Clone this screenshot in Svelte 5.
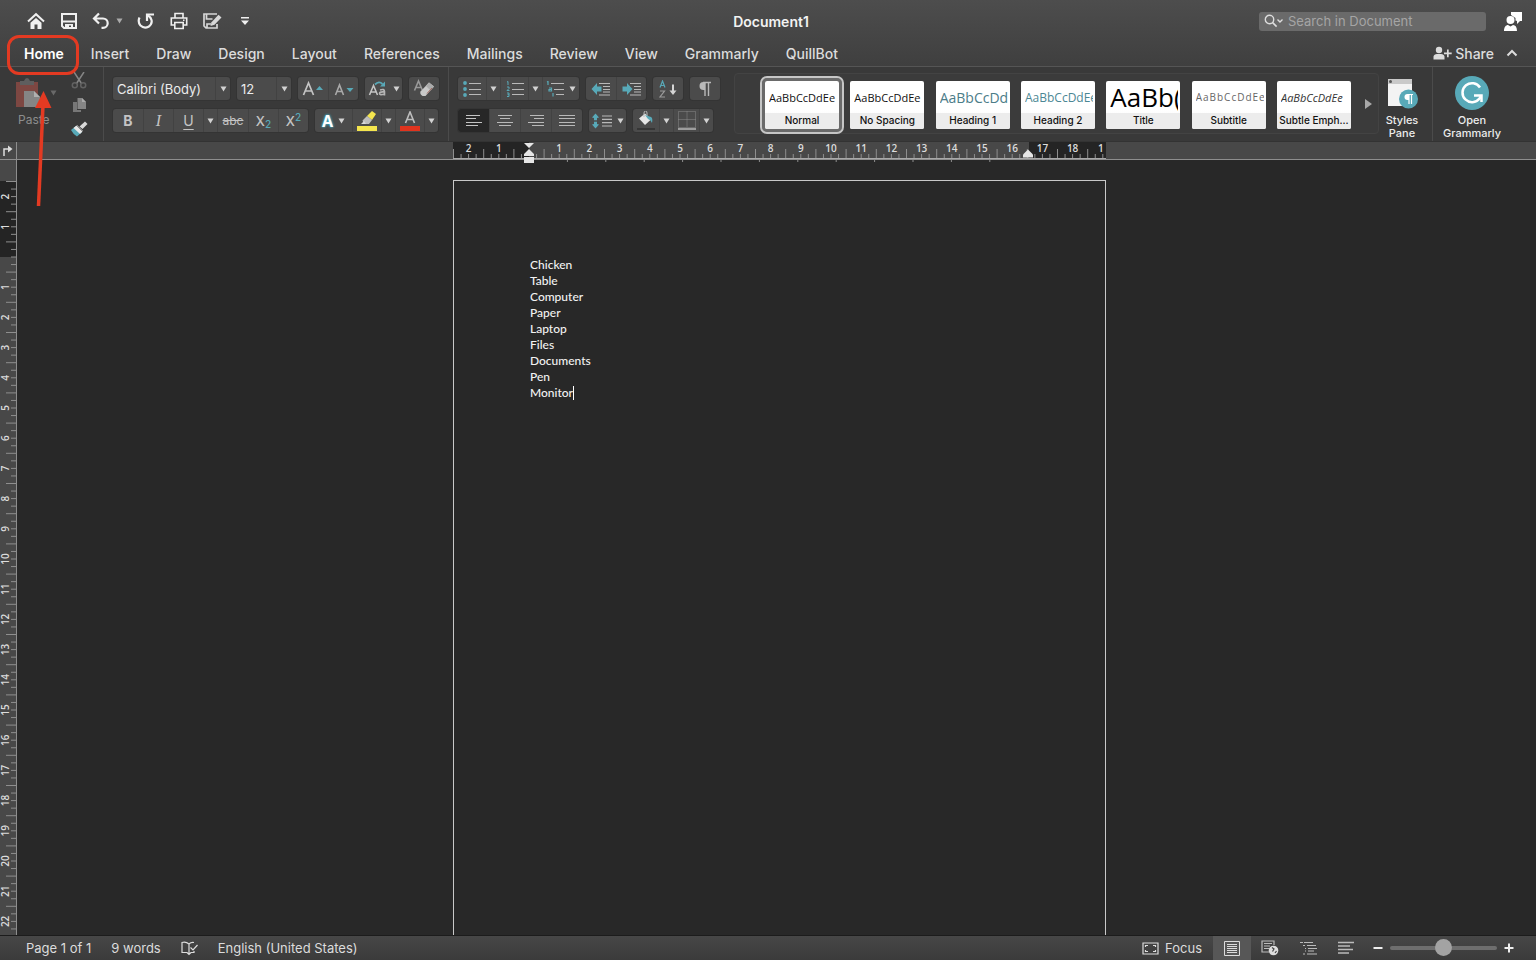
<script>
    const tabs = ["Home", "Insert", "Draw", "Design", "Layout", "References", "Mailings", "Review", "View", "Grammarly", "QuillBot"]
    const styles = [
        { name: "Normal", look: "body" },
        { name: "No Spacing", look: "body" },
        { name: "Heading 1", look: "h1" },
        { name: "Heading 2", look: "h2" },
        { name: "Title", look: "title" },
        { name: "Subtitle", look: "subtitle" },
        { name: "Subtle Emph...", look: "emph" }
    ]
    const lines = ["Chicken", "Table", "Computer", "Paper", "Laptop", "Files", "Documents", "Pen", "Monitor"]

    let activeTab = $state("Home")
    let activeStyle = $state("Normal")
    let zoom = $state(50)

    // one centimetre on screen, and the width of the page margin
    const cm = 30.2
    const margin = 76

    function makeTicks(from, to) {
        const out = []
        for (let q = from; q <= to; q++) {
            out.push({ at: margin + (q * cm) / 4, tall: Math.abs(q % 4) === 2 })
        }
        return out
    }

    function makeNumbers(from, to) {
        const out = []
        for (let n = from; n <= to; n++) {
            if (n !== 0) out.push({ at: margin + n * cm, label: Math.abs(n) })
        }
        return out
    }

    const hTicks = makeTicks(-10, 76).filter(t => t.at !== margin)
    const hNumbers = makeNumbers(-2, 18)
    const tabStops = Array.from({ length: 12 }, (_, i) => margin + (i + 1) * 38.4)
    const vTicks = makeTicks(-10, 160)
    const vNumbers = makeNumbers(-2, 22)
</script>

{#snippet caret()}
    <svg class="caret" width="7" height="6" viewBox="0 0 7 6"><path d="M0.5 0.5h6L3.5 5.5z" fill="currentColor" /></svg>
{/snippet}

{#snippet drop(label)}
    <button class="drop" aria-label={label}>{@render caret()}</button>
{/snippet}

<div class="app">
    <header>
        <div class="titlebar">
            <div class="quick">
                <button aria-label="Home">
                    <svg width="18" height="18" viewBox="0 0 18 18"><path d="M1 9.5L9 2.2l8 7.3" fill="none" stroke="currentColor" stroke-width="2" /><path d="M3.500 10.800L9 6l5.500 4.800V17h-4v-4.500h-3V17h-4z" fill="currentColor" /></svg>
                </button>
                <button aria-label="Save">
                    <svg width="18" height="18" viewBox="0 0 18 18"><path d="M2 2h14v14H4l-2-2z" fill="none" stroke="currentColor" stroke-width="2" /><path d="M2 9.500h14" stroke="currentColor" stroke-width="2" /><path d="M5 12h8v4h-2v-2.500H9V16H5z" fill="currentColor" /></svg>
                </button>
                <button class="undo" aria-label="Undo">
                    <svg width="18" height="18" viewBox="0 0 18 18"><path d="M7 1.500L2 6.500l5 5M2.500 6.500h8.500a4.700 4.700 0 0 1 0 9.400H9.500" fill="none" stroke="currentColor" stroke-width="2.200" /></svg>
                    {@render caret()}
                </button>
                <button aria-label="Redo">
                    <svg width="18" height="18" viewBox="0 0 18 18"><path d="M2.500 5.500Q0.500 10 3.500 13.500 7 17 11.500 14.800 15.500 12 14.500 8 13.500 5 11 3.500" fill="none" stroke="currentColor" stroke-width="2.200" /><path d="M10 9V2.500H17" fill="none" stroke="currentColor" stroke-width="2.200" /></svg>
                </button>
                <button aria-label="Print">
                    <svg width="18" height="18" viewBox="0 0 18 18" fill="none" stroke="currentColor" stroke-width="1.600"><path d="M5 6V1.500h8V6M4.500 13H1.300V6h15.400v7h-3.200" /><path d="M4.800 10.500h8.400v6H4.800zM13 8.300h1.500" /></svg>
                </button>
                <button aria-label="Edit and save">
                    <svg width="20" height="18" viewBox="0 0 20 18" opacity="0.850"><path d="M15 2H2v12l2 2h11v-4M4.500 2v5h6M5 16v-4h4" fill="none" stroke="currentColor" stroke-width="1.700" /><path d="M8.500 14l1-3.800 7-7.400 3 2.800-7 7.200z" fill="currentColor" /></svg>
                </button>
                <button aria-label="Customize toolbar">
                    <svg width="10" height="10" viewBox="0 0 10 10"><path d="M1 1h8v1.500H1zM1 4.500h8L5 9z" fill="currentColor" /></svg>
                </button>
            </div>
            <h1>Document1</h1>
            <div class="tools">
                <label class="search">
                    <svg width="20" height="14" viewBox="0 0 20 14" fill="none" stroke="currentColor"><circle cx="5.500" cy="5.500" r="4.200" stroke-width="1.400" /><path d="M8.600 8.600l4 4" stroke-width="1.600" /><path d="M13.500 5.500L16 8l2.500-2.500" stroke-width="1.400" /></svg>
                    <input type="text" placeholder="Search in Document" aria-label="Search in Document" />
                </label>
                <button aria-label="Feedback">
                    <svg width="20" height="20" viewBox="0 0 20 20" fill="currentColor"><path d="M8 1h11v9h-2l-3 3v-3l-1.500-.500V7L8 4z" /><circle cx="7.500" cy="9" r="4" /><path d="M1 20c0-4 2-6 4-6l2.500 1.500L10 14c2.500 0 4 2 4 6z" /></svg>
                </button>
            </div>
        </div>
        <div class="tabrow">
            <nav>
                {#each tabs as tab}
                    <button class:active={tab === activeTab} onclick={() => (activeTab = tab)}>{tab}</button>
                {/each}
                <span class="ring"></span>
            </nav>
            <div class="share">
                <button>
                    <svg width="19" height="14" viewBox="0 0 19 14" fill="currentColor"><circle cx="6" cy="4" r="3.200" /><path d="M0.500 13.500V10.500Q1 8 4 8h4q3 0 3.500 2.500v3zM14 3.500h1.700v3h3v1.700h-3v3H14v-3h-3V6.500h3z" /></svg>
                    Share
                </button>
                <button aria-label="Collapse ribbon">
                    <svg width="12" height="8" viewBox="0 0 12 8"><path d="M1.500 6.500L6 2l4.500 4.500" fill="none" stroke="currentColor" stroke-width="2" /></svg>
                </button>
            </div>
        </div>
    </header>

    <section class="ribbon">
        <div class="clipboard">
            <button class="paste" disabled>
                <span class="pasteicon">
                    <svg width="26" height="30" viewBox="0 0 26 30"><path d="M1 4h22v25H1z" fill="#7d4742" /><path d="M5 7V3h4q1-3 3-3t3 3h4v4z" fill="#5e5e5e" /><path d="M9 13h10l6 6v10H9z" fill="#858585" /><path d="M19 13v6h6z" fill="#b0b0b0" /></svg>
                    {@render caret()}
                </span>
                <span class="pastename">Paste</span>
            </button>
            <div class="clipside">
                <button aria-label="Cut" disabled>
                    <svg width="16" height="17" viewBox="0 0 16 17" fill="none" stroke="#858585" stroke-width="1.500"><path d="M3 0l7.500 11.500M13 0L5.500 11.500" /><circle cx="3.800" cy="13.300" r="2.500" stroke="#626262" /><circle cx="12.200" cy="13.300" r="2.500" stroke="#626262" /></svg>
                </button>
                <button aria-label="Copy" disabled>
                    <svg width="14" height="16" viewBox="0 0 14 16"><path d="M1 5h4v8h4v2H1z" fill="#777" /><path d="M5.500 1H10l4 4v7H5.500z" fill="#858585" /><path d="M10 1v4h4" fill="#aaa" /></svg>
                </button>
                <button aria-label="Format painter">
                    <svg width="18" height="16" viewBox="0 0 18 16"><path d="M1 9l5-4 6 6-5 4.500Q3 13 1 9z" fill="#58a9b8" /><path d="M3.500 7l3-2.500 6 6-2.500 2.500z" fill="#e8e8e8" /><path d="M9.500 5.500L15 0.500l2.500 2.500-5 5z" fill="#d9d9d9" /><path d="M7 4l6 6" stroke="#888" /></svg>
                </button>
            </div>
        </div>

        <div class="block font">
            <div class="row">
                <label class="combo family">
                    <select aria-label="Font"><option>Calibri (Body)</option></select>
                    <span class="arrow">{@render caret()}</span>
                </label>
                <label class="combo size">
                    <select aria-label="Font size"><option>12</option></select>
                    <span class="arrow">{@render caret()}</span>
                </label>
                <div class="group">
                    <button aria-label="Grow font"><svg width="22" height="16" viewBox="0 0 22 16"><path d="M1.500 14L6.500 2l5 12M3.500 10h6" fill="none" stroke="#c4c4c4" stroke-width="1.700" /><path d="M14 9l3.500-4L21 9z" fill="#58a9b8" /></svg></button>
                    <button aria-label="Shrink font"><svg width="22" height="16" viewBox="0 0 22 16"><path d="M2.500 14L6.500 4l4 10M4 10.500h5" fill="none" stroke="#a9a9a9" stroke-width="1.600" /><path d="M13.500 7h7L17 11z" fill="#58a9b8" /></svg></button>
                </div>
                <div class="group">
                    <button class="split" aria-label="Change case">
                        <svg width="20" height="18" viewBox="0 0 20 18" fill="none"><path d="M1.500 15L5.500 5.500l4 9.500M3 12h5" stroke="#c4c4c4" stroke-width="1.600" /><path d="M12 10q4.500-1.500 4.500 1.500v4M16.500 12q-5-.500-5 1.500t5 .500" stroke="#b5b5b5" stroke-width="1.600" /><path d="M7 4.500q4-4 7.500-.500" stroke="#58a9b8" stroke-width="1.800" /><path d="M12 6.500h5v-5z" fill="#58a9b8" /></svg>
                        {@render caret()}
                    </button>
                </div>
                <div class="group">
                    <button aria-label="Clear formatting"><svg width="22" height="20" viewBox="0 0 22 20"><path d="M1.500 11.500L5.500 2l4 9.500M3 8.500h5" fill="none" stroke="#999" stroke-width="1.600" /><path d="M7.500 12.500l8.500-9 5 4-8.500 9.500H9.500q-3-2-2-4.500z" fill="#c9c9c9" /><path d="M16 3.500l5 4-3.500 4-4.500-4.500z" fill="#ababab" /><path d="M14 14.500l5-5.500" stroke="#a2685d" /></svg></button>
                </div>
            </div>
            <div class="row">
                <div class="group">
                    <button class="bold">B</button>
                    <button class="italic">I</button>
                    <button class="under">U</button>
                    {@render drop("Underline style")}
                    <button class="strike">abc</button>
                    <button class="script">X<sub>2</sub></button>
                    <button class="script">X<sup>2</sup></button>
                </div>
                <div class="group colors">
                    <button class="split glow"><b>A</b>{@render caret()}</button>
                    <button aria-label="Highlight"><svg width="20" height="20" viewBox="0 0 20 20"><path d="M10 5l5-5 4 3-4 6z" fill="#f4e54e" /><path d="M5.500 9.500L10 5l5 4-3 4H7z" fill="#bdbdbd" /><path d="M4 13l3-3 2 3z" fill="#d8d8d8" /><path d="M0 15h20v5H0z" fill="#f4e54e" /></svg></button>
                    {@render drop("Highlight color")}
                    <button aria-label="Font color"><svg width="20" height="20" viewBox="0 0 20 20"><path d="M5.500 12L10 1l4.500 11M7 8.500h6" fill="none" stroke="#bdbdbd" stroke-width="1.600" /><path d="M0 15h20v5H0z" fill="#e0341e" /></svg></button>
                    {@render drop("Pick font color")}
                </div>
            </div>
        </div>

        <div class="block para">
            <div class="row">
                <div class="group">
                    <button aria-label="Bullets"><svg width="18" height="16" viewBox="0 0 18 16"><g fill="#58a9b8"><circle cx="2" cy="2" r="1.900" /><circle cx="2" cy="8" r="1.900" /><circle cx="2" cy="14" r="1.900" /></g><path d="M6 2.500h12M6 8.500h12M6 13.500h12" stroke="#b9b9b9" /></svg></button>
                    {@render drop("Bullet style")}
                    <button aria-label="Numbering"><svg width="18" height="16" viewBox="0 0 18 16" fill="none"><path d="M1 1l1-.500V4M1 6h2v1.500L1 9.500h2.500M1 12h2v3.500H1M1.500 13.700H3" stroke="#58a9b8" /><path d="M6 2.500h12M6 8.500h12M6 13.500h12" stroke="#b9b9b9" /></svg></button>
                    {@render drop("Number style")}
                    <button class="split" aria-label="Multilevel list">
                        <svg width="18" height="16" viewBox="0 0 18 16" fill="none"><path d="M1 1l1-.500V4M3 7h2.500v3H3V8.500h2M7 12v3.500" stroke="#58a9b8" stroke-width="1.200" /><path d="M5 2.500h13M8 8.500h10M10 13.500h8" stroke="#b9b9b9" /></svg>
                        {@render caret()}
                    </button>
                </div>
                <div class="group">
                    <button aria-label="Decrease indent"><svg width="20" height="14" viewBox="0 0 20 14"><path d="M8 1.500h11M12 4.500h7M12 7.500h7M12 10h7M8 13h11" stroke="#b9b9b9" stroke-width="1.200" /><path d="M0.500 7L6 1v3.500h4.500v5H6V13z" fill="#58a9b8" /></svg></button>
                    <button aria-label="Increase indent"><svg width="20" height="14" viewBox="0 0 20 14"><path d="M8 1.500h11M12 4.500h7M12 7.500h7M12 10h7M8 13h11" stroke="#b9b9b9" stroke-width="1.200" /><path d="M10.500 7L5 1v3.500H0.500v5H5V13z" fill="#58a9b8" /></svg></button>
                </div>
                <div class="group">
                    <button aria-label="Sort"><svg width="18" height="18" viewBox="0 0 18 18" fill="none"><path d="M1 7.500L3.500 1 6 7.500M2 5.500h3" stroke="#58a9b8" stroke-width="1.200" /><path d="M1 11h4.500L1 17h5" stroke="#9b9b9b" stroke-width="1.200" /><path d="M14 4.500V13" stroke="#d5d5d5" stroke-width="2" /><path d="M10.500 10.500h7L14 15z" fill="#d5d5d5" /></svg></button>
                </div>
                <div class="group">
                    <button aria-label="Show paragraph marks"><svg width="14" height="16" viewBox="0 0 14 16"><path d="M7 1H5.500a4 4 0 0 0 0 8H7z" fill="#b9b9b9" /><path d="M7 1v14M10.500 1v14M5 1.500h8" fill="none" stroke="#b9b9b9" stroke-width="1.400" /></svg></button>
                </div>
            </div>
            <div class="row">
                <div class="group aligns">
                    <button class="pressed" aria-label="Align left"><svg width="16" height="13" viewBox="0 0 16 13"><path d="M0 1.500h14M0 4.500h10M0 8.500h16M0 11.500h12" stroke="#c4c4c4" /></svg></button>
                    <button aria-label="Center"><svg width="16" height="13" viewBox="0 0 16 13"><path d="M1 1.500h14M3 4.500h10M0 8.500h16M2 11.500h12" stroke="#b9b9b9" /></svg></button>
                    <button aria-label="Align right"><svg width="16" height="13" viewBox="0 0 16 13"><path d="M2 1.500h14M6 4.500h10M0 8.500h16M4 11.500h12" stroke="#b9b9b9" /></svg></button>
                    <button aria-label="Justify"><svg width="16" height="13" viewBox="0 0 16 13"><path d="M0 1.500h16M0 4.500h16M0 8.500h16M0 11.500h16" stroke="#b9b9b9" /></svg></button>
                </div>
                <div class="group">
                    <button class="split" aria-label="Line spacing">
                        <svg width="20" height="16" viewBox="0 0 20 16"><path d="M0 4.500L3.500 0.500 7 4.500 5 5v2.300H2V5zM0 11.500l2-.500V8.700h3V11l2 .500-3.500 4z" fill="#58a9b8" /><path d="M10 3h10M10 6.300h10M10 9.700h10M10 13h10" stroke="#b9b9b9" stroke-width="1.200" /></svg>
                        {@render caret()}
                    </button>
                </div>
                <div class="group fills">
                    <button aria-label="Shading"><svg width="18" height="20" viewBox="0 0 18 20"><path d="M2 7.500L8 2.500l6 6-6 5.500z" fill="#e6e6e6" /><path d="M7 6V2q0-2 1.500-2T10 2v3" fill="none" stroke="#b9b9b9" /><path d="M8 4l6 2q2 1 1 6-1-3-4-4z" fill="#58a9b8" /><path d="M0 17h18v2H0z" fill="#363636" /></svg></button>
                    {@render drop("Shading color")}
                    <button aria-label="Borders"><svg width="18" height="19" viewBox="0 0 18 19" fill="none"><path d="M0.500 0.500h17v16H0.500zM9 0.500v16M0.500 8.500h17" stroke="#8a8a8a" stroke-dasharray="1 1" /><path d="M0 18h18" stroke="#b9b9b9" stroke-width="1.500" /></svg></button>
                    {@render drop("Border style")}
                </div>
            </div>
        </div>

        <div class="gallery">
            <div class="cards">
                {#each styles as s}
                    <button class="card" class:selected={s.name === activeStyle} onclick={() => (activeStyle = s.name)}>
                        <span class="sample {s.look}">{s.look === "title" ? "AaBb(" : "AaBbCcDdEe"}</span>
                        <span class="name">{s.name}</span>
                    </button>
                {/each}
            </div>
            <button class="more" aria-label="More styles"><svg width="7" height="10" viewBox="0 0 7 10"><path d="M0 0l7 5-7 5z" fill="#a8a8a8" /></svg></button>
        </div>

        <button class="big pane">
            <svg width="34" height="34" viewBox="0 0 34 34"><path d="M3 3h24v27H3z" fill="#f3f3f3" /><path d="M3 3h24v5H3z" fill="#c9c9c9" /><circle cx="5.500" cy="5.500" r="1.500" fill="#555" /><circle cx="23.500" cy="23" r="9.500" fill="#58a9b8" /><path d="M24 18h-1.500a3 3 0 0 0 0 6H24z" fill="#fff" /><path d="M24 18v10M26.500 18v10M23 18.500h5" stroke="#fff" stroke-width="1.200" /></svg>
            Styles<br />Pane
        </button>
        <button class="big grammarly">
            <svg width="34" height="34" viewBox="0 0 34 34"><circle cx="17" cy="17" r="17" fill="#58a9b8" /><path d="M25 11.500A9.500 9.500 0 1 0 24.500 22.500L26 20" fill="none" stroke="#fff" stroke-width="2.500" /><path d="M19 19.500h7.500v6.500" fill="none" stroke="#fff" stroke-width="2.500" /></svg>
            Open<br />Grammarly
        </button>
    </section>

    <div class="hruler">
        <div class="corner"><svg width="11" height="12" viewBox="0 0 11 12"><path d="M2 11V4h5" fill="none" stroke="#ddd" stroke-width="1.500" /><path d="M6 0.500L10.500 4 6 7.500z" fill="#ddd" /></svg></div>
        <div class="track">
            <svg width="653" height="21" viewBox="0 0 653 21">
                <rect width="76" height="16" fill="#242424" />
                <rect x="576" width="77" height="16" fill="#242424" />
                <path d="M0 16.500h653" stroke="#a9a9a9" />
                {#each hTicks as t}
                    <line x1={t.at} x2={t.at} y1={t.tall ? 7 : 12} y2="16" stroke="#8e8e8e" />
                {/each}
                {#each tabStops as x}
                    <line x1={x} x2={x} y1="17" y2="20" stroke="#8e8e8e" />
                {/each}
                {#each hNumbers as n}
                    <text x={n.at} y="10" text-anchor="middle">{n.label}</text>
                {/each}
                <text x="645" y="10">1</text>
                <path d="M71 1h10l-5 5zM76 7l5 5v2H71v-2zM71 15h10v6H71z" fill="#e6e6e6" />
                <path d="M575 7.500l5 5v3h-10v-3z" fill="#e6e6e6" />
            </svg>
        </div>
    </div>

    <main>
        <div class="vruler">
            <svg width="17" height="1240" viewBox="0 -21 17 1240">
                <rect y="0" width="16" height="76" fill="#242424" />
                {#each vTicks as t}
                    <line y1={t.at} y2={t.at} x1={t.tall ? 6 : 11} x2="16" stroke="#8e8e8e" />
                {/each}
                {#each vNumbers as n}
                    <text transform="translate(9 {n.at}) rotate(-90)" text-anchor="middle">{n.label}</text>
                {/each}
            </svg>
        </div>
        <div class="canvas">
            <article>
                {#each lines as line, i}
                    <p class:typing={i === lines.length - 1}>{line}</p>
                {/each}
            </article>
        </div>
    </main>

    <footer>
        <div class="left">
            <span>Page 1 of 1</span>
            <span>9 words</span>
            <button aria-label="Spelling"><svg width="17" height="15" viewBox="0 0 17 15" fill="none" stroke="currentColor" stroke-width="1.200"><path d="M8 3Q5 0.500 1 1.500v10h5l2 2 2-2h3V10M8 3v10M8 3q2-2 5-1.500M9.500 6.500l2.500 2.500 4.500-5" /></svg></button>
            <span>English (United States)</span>
        </div>
        <div class="right">
            <button class="focus"><svg width="17" height="13" viewBox="0 0 17 13" fill="none" stroke="currentColor" stroke-width="1.200"><path d="M1 1h15v11H1z" /><path d="M3.500 5V3.500H6M11 3.500h2.500V5M13.500 8v1.500H11M6 9.500H3.500V8" /></svg>Focus</button>
            <button class="view on" aria-label="Print layout"><svg width="16" height="15" viewBox="0 0 16 15" fill="none" stroke="#ddd"><path d="M0.500 0.500h15v14H0.500zM3 3.500h10M3 5.500h10M3 7.500h10M3 9.500h10M3 11.500h10" /></svg></button>
            <button class="view" aria-label="Web layout"><svg width="18" height="16" viewBox="0 0 18 16" fill="none" stroke="#bbb" stroke-width="1.200"><path d="M8 12H1V1h12v4M3 3.500h8M3 6h6M3 8.500h5" /><circle cx="12.500" cy="10.500" r="4.800" fill="#ddd" stroke="none" /><path d="M11 7.500l2 1.500-1.500 2.500M14 13l1.500-2" stroke="#444" /></svg></button>
            <button class="view" aria-label="Outline"><svg width="17" height="14" viewBox="0 0 17 14" fill="none" stroke="#bbb" stroke-width="1.200"><path d="M0 1.500h3M4 1.500h9M3 4.500h2M7 4.500h9M5 7.500h1M8 7.500h9M5 10h1M8 10h6M3 13h2M7 13h10" /></svg></button>
            <button class="view" aria-label="Draft"><svg width="16" height="14" viewBox="0 0 16 14" stroke="#bbb" stroke-width="1.300"><path d="M0 1.500h16M0 5h12M0 8.500h15M0 12h11" /></svg></button>
            <button class="step" aria-label="Zoom out"><svg width="10" height="10" viewBox="0 0 10 10"><path d="M0.500 5h9" stroke="#eee" stroke-width="2" /></svg></button>
            <input type="range" min="0" max="100" bind:value={zoom} aria-label="Zoom" />
            <button class="step" aria-label="Zoom in"><svg width="10" height="10" viewBox="0 0 10 10"><path d="M0.500 5h9M5 0.500v9" stroke="#eee" stroke-width="2" /></svg></button>
        </div>
    </footer>

    <svg class="pointer" width="20" height="116" viewBox="0 0 20 116"><path d="M6.500 115L11 14" stroke="#e33a22" stroke-width="3.500" fill="none" /><path d="M11.500 0L19.500 17H3z" fill="#e33a22" /></svg>
</div>

<style>
    :global(body) {
        background: #282828;
    }

    .app {
        position: relative;
        height: 100vh;
        display: flex;
        flex-direction: column;
        overflow: hidden;
        font-family: Inter, "Liberation Sans", sans-serif;
        font-size: 13px;
        color: #dcdcdc;
    }

    button, input, select {
        font: inherit;
        color: inherit;
        background: none;
        border: none;
        padding: 0;
        margin: 0;
    }

    button {
        display: flex;
        align-items: center;
        justify-content: center;
    }

    svg {
        flex: none;
        display: block;
    }

    header {
        background: linear-gradient(#4d4d4d, #3f3f3f);
        border-bottom: 1px solid #555;
    }

    .titlebar {
        display: grid;
        grid-template-columns: 1fr auto 1fr;
        align-items: center;
        height: 42px;
        padding: 0 13px 0 19px;
    }

    .quick {
        display: flex;
        color: #f0f0f0;
    }

    .quick button {
        width: 33px;
        height: 20px;
    }

    .quick .undo {
        width: 44px;
        gap: 6px;
    }

    .quick .undo .caret {
        color: #aaa;
    }

    h1 {
        margin: 0;
        font-size: 14px;
        font-weight: 600;
        color: #f2f2f2;
    }

    .tools {
        display: flex;
        justify-content: flex-end;
        align-items: center;
        gap: 17px;
        color: #fff;
    }

    .search {
        display: flex;
        align-items: center;
        gap: 4px;
        width: 222px;
        height: 19px;
        padding-left: 5px;
        border-radius: 3px;
        background: #6a6a6a;
        color: #ddd;
    }

    .search input {
        width: 100%;
        outline: none;
    }

    .search input::placeholder {
        color: #a5a5a5;
    }

    .tabrow {
        display: flex;
        justify-content: space-between;
        height: 24px;
        padding: 0 18px 0 24px;
    }

    nav {
        position: relative;
        display: flex;
        gap: 27px;
    }

    nav button, .share button {
        height: 22px;
        font-size: 14px;
        font-weight: 500;
        gap: 3px;
    }

    nav .active {
        font-weight: 600;
        color: #fff;
    }

    /* marks the tab being talked about */
    .ring {
        position: absolute;
        left: -17px;
        top: -7px;
        width: 66px;
        height: 34px;
        border: 3px solid #e33a22;
        border-radius: 12px;
        z-index: 2;
    }

    .share {
        display: flex;
        gap: 12px;
    }

    .ribbon {
        display: flex;
        height: 75px;
        background: #393939;
        border-bottom: 1px solid #333;
        box-sizing: border-box;
    }

    .clipboard {
        display: flex;
        gap: 8px;
        width: 103px;
        padding: 5px 0 0 15px;
        box-sizing: border-box;
    }

    .paste {
        flex-direction: column;
        justify-content: flex-end;
        gap: 4px;
        width: 42px;
        height: 55px;
        font-size: 12px;
        color: #8d8d8d;
        align-items: flex-start;
    }

    .pasteicon {
        display: flex;
        align-items: center;
        gap: 9px;
    }

    .pastename {
        padding-left: 3px;
    }

    .clipside {
        display: flex;
        flex-direction: column;
        align-items: center;
        gap: 8px;
        padding-left: 5px;
    }

    .caret {
        color: #d2d2d2;
    }

    .paste .caret {
        color: #696969;
    }

    .block {
        display: flex;
        flex-direction: column;
        gap: 9px;
        padding: 10px 9px 0;
        border-left: 1px solid #4b4b4b;
    }

    .row {
        display: flex;
        gap: 7px;
    }

    .group, .combo {
        display: flex;
        height: 23px;
        border-radius: 3px;
        background: #4b4b4b;
        box-shadow: 0 0 0 1px #343434;
        overflow: hidden;
    }

    .group button {
        width: 30px;
        color: #c4c4c4;
    }

    .group button + button {
        border-left: 1px solid #424242;
        box-sizing: border-box;
    }

    .group .drop {
        width: 14px;
    }

    .group .split {
        width: 37px;
        gap: 5px;
    }

    .group .strike {
        width: 31px;
    }

    .colors button:not(.drop, .split) {
        width: 29px;
    }

    .para .group button:not(.drop, .split) {
        width: 28px;
    }

    .para .group:nth-child(n+2) button:not(.drop, .split) {
        width: 30px;
    }

    .para .aligns button:not(.drop, .split) {
        width: 31px;
    }

    .para .fills button:nth-child(n):not(.drop, .split) {
        width: 26px;
    }

    .pressed {
        background: #272727;
    }

    .combo select {
        flex: 1;
        min-width: 0;
        appearance: none;
        padding-left: 4px;
        color: #ececec;
    }

    .family {
        width: 117px;
    }

    .size {
        width: 54px;
    }

    .arrow {
        display: flex;
        align-items: center;
        justify-content: center;
        width: 14px;
        border-left: 1px solid #424242;
    }

    .bold {
        font-size: 14px;
        font-weight: 700;
    }

    .italic {
        font-family: "Liberation Serif", serif;
        font-style: italic;
        font-size: 16px;
    }

    .under {
        font-size: 14px;
        text-decoration: underline;
        text-underline-offset: 3px;
    }

    .strike {
        font-size: 12px;
        text-decoration: line-through;
    }

    .script {
        font-weight: 500;
    }

    .script sub, .script sup {
        font-size: 10px;
        color: #58a9b8;
        line-height: 8px;
    }

    .script sub {
        align-self: flex-end;
        padding-bottom: 4px;
    }

    .script sup {
        align-self: flex-start;
        padding-top: 4px;
    }

    .glow b {
        font-family: "Open Sans", sans-serif;
        font-size: 16px;
        line-height: 16px;
        color: #fff;
        text-shadow: 0 0 2px #3fb4cc, 0 0 3px #3fb4cc;
    }

    .gallery {
        flex: 1;
        display: flex;
        min-width: 0;
        height: 61px;
        margin: 6px 0 0 5px;
        border: 1px solid #434343;
        border-radius: 4px;
        background: #3b3b3b;
        box-sizing: border-box;
    }

    .cards {
        flex: 1;
        display: flex;
        justify-content: space-between;
        padding: 7px 0 0 30px;
    }

    .card {
        display: flex;
        flex-direction: column;
        justify-content: stretch;
        align-items: stretch;
        width: 74px;
        height: 48px;
        border-radius: 2px;
        background: linear-gradient(#fff 60%, #f5f5f5);
        color: #111;
    }

    .card.selected {
        outline: 2px solid #c6c6c6;
        outline-offset: 3px;
        box-shadow: 0 0 0 3px #6a6a6a;
    }

    .sample {
        flex: 1;
        margin: 0 2px 0 4px;
        overflow: hidden;
        white-space: nowrap;
        text-align: left;
        font-family: "Open Sans", "Noto Sans", sans-serif;
        font-size: 11px;
        font-weight: 500;
        line-height: 33px;
    }

    .h1 {
        font-size: 14px;
        font-weight: 400;
        color: #4b7c88;
    }

    .h2 {
        font-size: 12px;
        font-weight: 400;
        color: #4b8794;
    }

    .title {
        font-size: 26px;
        font-weight: 400;
        color: #000;
    }

    .subtitle {
        font-size: 10px;
        color: #666;
        letter-spacing: 1px;
    }

    .emph {
        font-style: italic;
        color: #333;
    }

    .name {
        height: 16px;
        line-height: 15px;
        background: #ececec;
        border-radius: 0 0 2px 2px;
        font-size: 10px;
        font-weight: 500;
        text-align: center;
        white-space: nowrap;
    }

    .more {
        width: 27px;
        padding-left: 8px;
    }

    .big {
        display: block;
        font-size: 11px;
        font-weight: 500;
        line-height: 13px;
        text-align: center;
        color: #ececec;
        padding-top: 8px;
        height: 74px;
    }

    .big svg {
        margin: 0 auto 4px;
    }

    .pane {
        width: 54px;
        padding-right: 7px;
        border-right: 1px solid #4b4b4b;
    }

    .grammarly {
        width: 103px;
        padding-right: 25px;
    }

    .hruler {
        display: flex;
        height: 17px;
        background: #484848;
        border-bottom: 1px solid #8e8e8e;
        position: relative;
        z-index: 1;
    }

    .corner {
        width: 17px;
        padding: 3px 0 0 2px;
        box-sizing: border-box;
        border-right: 1px solid #8e8e8e;
    }

    .track {
        flex: 1;
        display: flex;
        justify-content: center;
        padding-left: 6px;
    }

    .hruler text, .vruler text {
        font: 600 10px "Open Sans", "Noto Sans", sans-serif;
        fill: #dcdcdc;
    }

    main {
        flex: 1;
        display: flex;
        min-height: 0;
        background: #282828;
    }

    .vruler {
        width: 16px;
        overflow: hidden;
        background: #484848;
        border-right: 1px solid #8e8e8e;
    }

    .canvas {
        flex: 1;
        display: flex;
        justify-content: center;
        padding: 20px 0 0 6px;
        overflow: hidden;
    }

    article {
        width: 653px;
        padding: 76px 76px;
        box-sizing: border-box;
        border: 1px solid #c9c9c9;
        border-bottom: none;
    }

    article p {
        margin: 0;
        font: 500 12px/16px Lato, "Open Sans", sans-serif;
        color: #f2f2f2;
    }

    .typing::after {
        content: "";
        display: inline-block;
        width: 1px;
        height: 14px;
        background: #fff;
        vertical-align: -3px;
    }

    footer {
        display: flex;
        justify-content: space-between;
        height: 25px;
        padding: 0 22px 0 26px;
        background: linear-gradient(#474747, #3b3b3b);
        border-top: 1px solid #1c1c1c;
        box-sizing: border-box;
    }

    .left, .right {
        display: flex;
        align-items: center;
    }

    .left {
        gap: 20px;
    }

    .focus {
        gap: 6px;
        margin-right: 11px;
    }

    .view {
        width: 38px;
        height: 24px;
    }

    .on {
        background: #575757;
    }

    .step {
        width: 10px;
        height: 20px;
    }

    .view + .step {
        margin-left: 8px;
    }

    input[type="range"] {
        appearance: none;
        width: 107px;
        height: 18px;
        margin: 0 7px;
    }

    input[type="range"]::-webkit-slider-runnable-track {
        height: 4px;
        border-radius: 2px;
        background: #6e6e6e;
    }

    input[type="range"]::-webkit-slider-thumb {
        appearance: none;
        width: 17px;
        height: 17px;
        margin-top: -7px;
        border-radius: 50%;
        background: #a3a3a3;
    }

    .pointer {
        position: absolute;
        left: 32px;
        top: 91px;
        pointer-events: none;
        z-index: 3;
    }
</style>
